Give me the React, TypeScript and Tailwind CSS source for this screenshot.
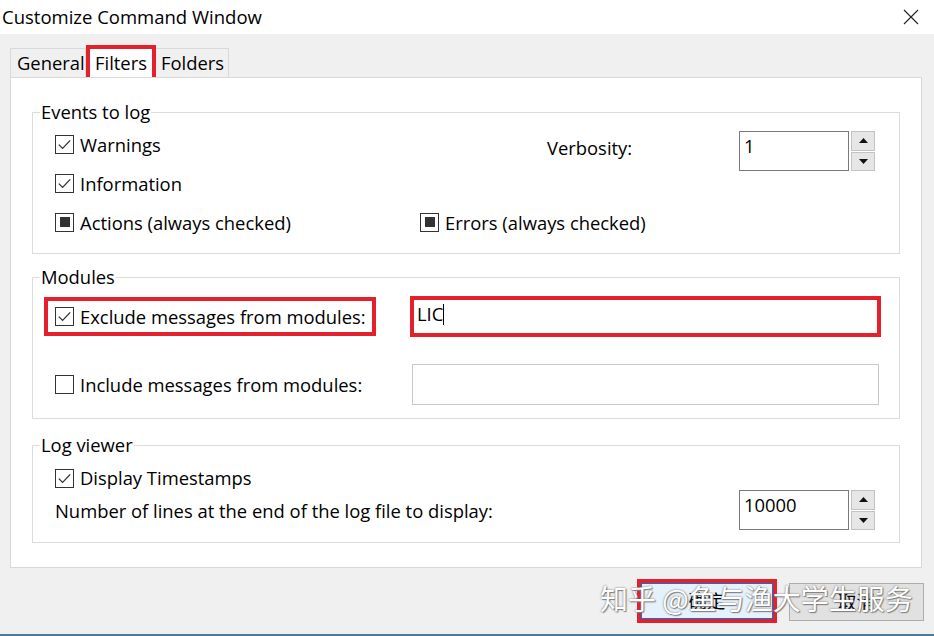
import React from "react";

const font = { fontFamily: '"Open Sans", "Noto Sans CJK SC", sans-serif' };

type CheckState = "checked" | "unchecked" | "filled";

const CheckBox: React.FC<{ state: CheckState }> = ({ state }) => (
  <span className="flex h-[19px] w-[19px] shrink-0 items-center justify-center border border-[#333333] bg-white">
    {state === "checked" && (
      <svg width="15" height="15" viewBox="0 0 15 15" fill="none">
        <path d="M1.8 7.6L5.6 11.4L13.2 3.4" stroke="#333333" strokeWidth="1.3" />
      </svg>
    )}
    {state === "filled" && <span className="h-[10px] w-[10px] bg-[#333333]" />}
  </span>
);

const CheckItem: React.FC<{ state: CheckState; label: string; className?: string }> = ({ state, label, className }) => (
  <label className={`flex items-center gap-[6px] ${className ?? ""}`}>
    <CheckBox state={state} />
    <span className="whitespace-nowrap">{label}</span>
  </label>
);

const Arrow: React.FC<{ up?: boolean }> = ({ up }) => (
  <svg width="9" height="5" viewBox="0 0 9 5">
    <path d={up ? "M0 5L4.5 0L9 5Z" : "M0 0L4.5 5L9 0Z"} fill="#111111" />
  </svg>
);

// champ numérique avec ses deux petites flèches
const SpinBox: React.FC<{ value: string; className?: string }> = ({ value, className }) => (
  <div className={`flex items-start gap-[2px] ${className ?? ""}`}>
    <div className="h-[40px] w-[110px] border border-[#7a7a7a] bg-white pl-[4px] pt-[1px] leading-[26px]">{value}</div>
    <div className="flex h-[40px] w-[24px] flex-col gap-[1px]">
      <button className="flex flex-1 items-center justify-center border border-[#c3c3c3] bg-[#e6e6e6]">
        <Arrow up />
      </button>
      <button className="flex flex-1 items-center justify-center border border-[#c3c3c3] bg-[#e6e6e6]">
        <Arrow />
      </button>
    </div>
  </div>
);

const Group: React.FC<{ title: string; className?: string; children: React.ReactNode }> = ({ title, className, children }) => (
  <fieldset className={`w-[868px] border border-[#dcdcdc] p-0 ${className ?? ""}`}>
    <legend className="ml-[7px] px-[1px] leading-[24px]">{title}</legend>
    {children}
  </fieldset>
);

export default function App() {
  return (
    <div className="relative flex h-[636px] w-[934px] flex-col overflow-hidden bg-[#f0f0f0] text-[18.4px] text-black" style={font}>
      {/* barre de titre */}
      <div className="flex h-[34px] shrink-0 items-center justify-between bg-white pl-[2px] pr-[15px]">
        <span className="text-[18.5px] leading-none">Customize Command Window</span>
        <svg width="16" height="16" viewBox="0 0 16 16" fill="none">
          <path d="M1 1L15 15M15 1L1 15" stroke="#222222" strokeWidth="1.1" />
        </svg>
      </div>

      {/* onglets */}
      <div className="ml-[10px] mt-[11px] flex h-[32px] items-end">
        <div className="flex h-[29px] w-[76px] items-center border border-b-0 border-[#d9d9d9] bg-[#f0f0f0] pl-[6px]">General</div>
        <div className="flex h-[32px] w-[70px] items-center justify-center border-4 border-b-0 border-[#e3202b] bg-white">Filters</div>
        <div className="flex h-[29px] w-[73px] items-center border border-b-0 border-l-0 border-[#d9d9d9] bg-[#f0f0f0] pl-[5px]">Folders</div>
      </div>

      {/* panneau */}
      <div className="ml-[10px] flex h-[491px] w-[912px] flex-col border border-[#d9d9d9] bg-white px-[21px]">
        <Group title="Events to log" className="mt-[22px] h-[154px]">
          <div className="flex flex-col pl-[22px] pt-[1px]">
            <div className="flex h-[39px] items-start">
              <CheckItem state="checked" label="Warnings" className="h-[39px] w-[492px]" />
              <span className="mt-[3px] flex h-[39px] w-[192px] items-center">Verbosity:</span>
              <SpinBox value="1" className="mt-[6px]" />
            </div>
            <div className="flex h-[39px] items-center">
              <CheckItem state="checked" label="Information" />
            </div>
            <div className="flex h-[39px] items-center">
              <CheckItem state="filled" label="Actions (always checked)" className="w-[365px]" />
              <CheckItem state="filled" label="Errors (always checked)" />
            </div>
          </div>
        </Group>

        <Group title="Modules" className="mt-[11px] h-[154px]">
          <div className="flex flex-col pt-[7px]">
            <div className="flex h-[41px] items-center pl-[11px]">
              <div className="flex h-[39px] w-[332px] items-center border-4 border-[#e3202b] pl-[7px]">
                <CheckItem state="checked" label="Exclude messages from modules:" />
              </div>
              <div className="ml-[34px] flex h-[41px] w-[471px] items-start border-4 border-[#e3202b] pl-[3px] pt-[1px]">
                <span className="leading-[26px]">LIC</span>
                <span className="mt-[3px] h-[21px] w-[1px] bg-black" />
              </div>
            </div>
            <div className="mt-[27px] flex h-[41px] items-center pl-[22px]">
              <CheckItem state="unchecked" label="Include messages from modules:" className="w-[357px]" />
              <div className="h-[41px] w-[467px] border border-[#c8c8c8] bg-white" />
            </div>
          </div>
        </Group>

        <Group title="Log viewer" className="mt-[14px] h-[110px]">
          <div className="flex items-start pl-[22px] pt-[6px]">
            <div className="flex w-[684px] flex-col gap-[3px]">
              <CheckItem state="checked" label="Display Timestamps" className="h-[30px]" />
              <span className="flex h-[30px] items-center">Number of lines at the end of the log file to display:</span>
            </div>
            <SpinBox value="10000" className="mt-[27px]" />
          </div>
        </Group>
      </div>

      {/* boutons */}
      <div className="mt-[11px] flex items-start justify-end gap-[12px] pr-[10px]">
        <div className="h-[44px] w-[140px] border-4 border-[#e3202b]">
          <button className="flex h-full w-full items-center justify-center border border-[#0078d7] bg-[#e5f1fb]">确定</button>
        </div>
        <button className="mt-[4px] flex h-[38px] w-[135px] items-center justify-center border border-[#adadad] bg-[#e1e1e1]">取消</button>
      </div>

      <div className="mt-auto h-[2px] w-full bg-[#4a7d9c]" />

      {/* filigrane */}
      <span
        className="pointer-events-none absolute left-[600px] top-[578px] whitespace-nowrap text-[28px] leading-[40px] text-white"
        style={{ fontFamily: '"Noto Sans CJK SC", sans-serif', textShadow: "0 0 2px #666, 1px 1px 1px #888" }}
      >
        知乎 @鱼与渔大学生服务
      </span>
    </div>
  );
}
